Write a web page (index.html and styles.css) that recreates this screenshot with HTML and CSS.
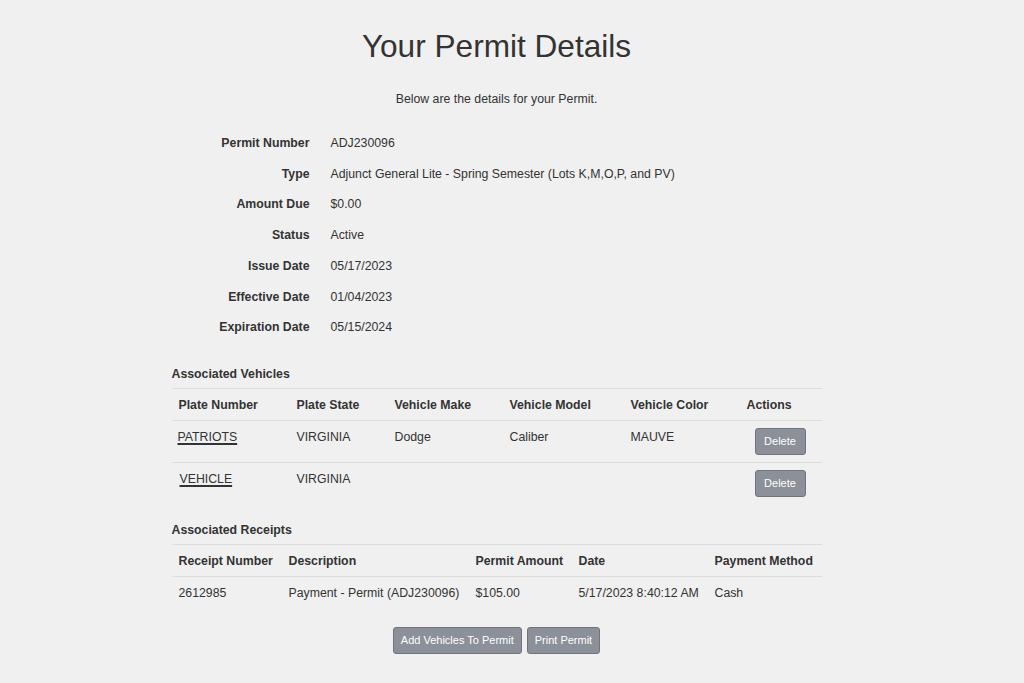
FILE: index.html
```html
<!DOCTYPE html>
<html>
<head>
<meta charset="utf-8">
<link rel="stylesheet" href="styles.css">
</head>
<body>
<div class="page">
  <h1 class="title">Your Permit Details</h1>
  <p class="intro">Below are the details for your Permit.</p>

  <div class="details">
    <div class="label">Permit Number</div><div class="value">ADJ230096</div>
    <div class="label">Type</div><div class="value">Adjunct General Lite - Spring Semester (Lots K,M,O,P, and PV)</div>
    <div class="label">Amount Due</div><div class="value">$0.00</div>
    <div class="label">Status</div><div class="value">Active</div>
    <div class="label">Issue Date</div><div class="value">05/17/2023</div>
    <div class="label">Effective Date</div><div class="value">01/04/2023</div>
    <div class="label">Expiration Date</div><div class="value">05/15/2024</div>
  </div>

  <h2 class="section">Associated Vehicles</h2>
  <table class="grid vehicles">
    <colgroup>
      <col style="width:118px"><col style="width:98px"><col style="width:115px"><col style="width:121px"><col style="width:116px"><col>
    </colgroup>
    <thead>
      <tr><th>Plate Number</th><th>Plate State</th><th>Vehicle Make</th><th>Vehicle Model</th><th>Vehicle Color</th><th>Actions</th></tr>
    </thead>
    <tbody>
      <tr><td><a href="#" class="plate">PATRIOTS</a></td><td>VIRGINIA</td><td>Dodge</td><td>Caliber</td><td>MAUVE</td><td class="action-cell"><button class="btn btn-small">Delete</button></td></tr>
      <tr><td><a href="#" class="plate plate-alt">VEHICLE</a></td><td>VIRGINIA</td><td></td><td></td><td></td><td class="action-cell"><button class="btn btn-small">Delete</button></td></tr>
    </tbody>
  </table>

  <h2 class="section section-receipts">Associated Receipts</h2>
  <table class="grid receipts">
    <colgroup>
      <col style="width:110px"><col style="width:187px"><col style="width:103px"><col style="width:136px"><col>
    </colgroup>
    <thead>
      <tr><th>Receipt Number</th><th>Description</th><th>Permit Amount</th><th>Date</th><th>Payment Method</th></tr>
    </thead>
    <tbody>
      <tr><td>2612985</td><td>Payment - Permit (ADJ230096)</td><td>$105.00</td><td>5/17/2023 8:40:12 AM</td><td>Cash</td></tr>
    </tbody>
  </table>

  <div class="actions">
    <button class="btn">Add Vehicles To Permit</button>
    <button class="btn">Print Permit</button>
  </div>
</div>
</body>
</html>
```

FILE: styles.css
```css
html, body {
  margin: 0;
  padding: 0;
  background: #f0f0f0;
}
body {
  font-family: "Liberation Sans", Arial, sans-serif;
  font-size: 12.3px;
  color: #333;
  padding-right: 31px;
}
.page {
  width: 650px;
  margin: 0 auto;
  padding-top: 28px;
}
.title {
  margin: 0;
  text-align: center;
  font-weight: normal;
  font-size: 31.6px;
  line-height: 36px;
  color: #333;
}
.intro {
  text-align: center;
  margin: 0;
  padding-top: 27px;
  line-height: 16px;
}
.details {
  display: grid;
  grid-template-columns: 138px 1fr;
  column-gap: 21px;
  row-gap: 15px;
  margin-top: 29px;
  line-height: 15.7px;
}
.label {
  text-align: right;
  font-weight: bold;
}
.section {
  font-size: 12.3px;
  font-weight: bold;
  margin: 31px 0 0;
  line-height: 15px;
  padding-bottom: 6px;
}
.section-receipts {
  margin-top: 19px;
}
.grid {
  width: 650px;
  border-collapse: collapse;
  table-layout: fixed;
}
.grid th, .grid td {
  text-align: left;
  vertical-align: top;
  padding: 8px 7px 8px 7px;
  line-height: 16px;
  border-top: 1px solid #dcdcdc;
}
.grid th {
  font-weight: bold;
}
.grid thead th {
  padding-top: 8px;
  padding-bottom: 7px;
}
.vehicles tbody td {
  padding-bottom: 6px;
}
.vehicles td:first-child {
  padding-left: 6px;
}
.receipts td, .receipts th {
  white-space: nowrap;
}
.plate {
  color: #333;
  text-decoration: underline;
  text-decoration-thickness: 2px;
  text-underline-offset: 2px;
}
.plate-alt {
  margin-left: 2px;
}
.vehicles .action-cell {
  padding-left: 15px;
  padding-top: 7px;
  padding-bottom: 7px;
}
.btn {
  font-family: "Liberation Sans", Arial, sans-serif;
  font-size: 11px;
  color: #fff;
  background: #8b9099;
  border: 1px solid #70757d;
  border-radius: 3px;
  height: 27px;
  padding: 0 7px;
  cursor: pointer;
}
.btn-small {
  display: block;
  width: 51px;
  padding: 0;
}
.actions {
  display: flex;
  justify-content: center;
  gap: 5px;
  margin-top: 18px;
}
```
